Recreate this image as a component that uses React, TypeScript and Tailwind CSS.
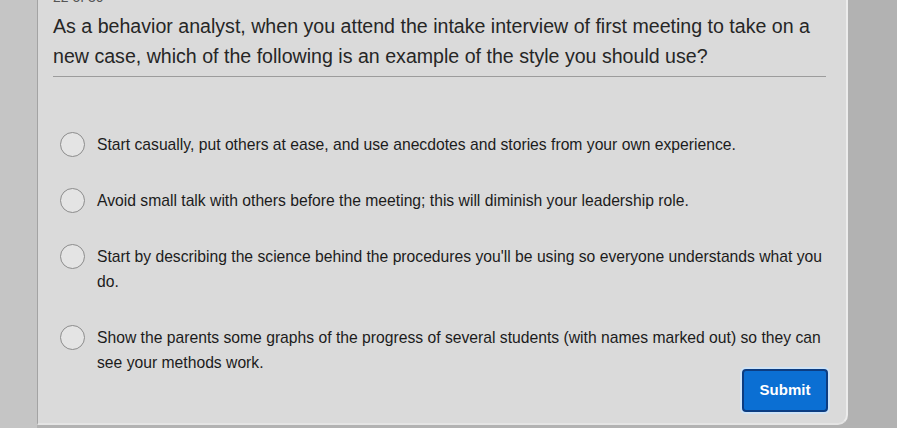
const options = [
  'Start casually, put others at ease, and use anecdotes and stories from your own experience.',
  'Avoid small talk with others before the meeting; this will diminish your leadership role.',
  "Start by describing the science behind the procedures you'll be using so everyone understands what you do.",
  'Show the parents some graphs of the progress of several students (with names marked out) so they can see your methods work.',
]

export default function App() {
  return (
    <div className="w-[897px] h-[428px] overflow-hidden flex bg-[#b2b2b2] font-['Liberation_Sans',Arial,sans-serif]">
      <div className="w-[37px] shrink-0 bg-[#c5c5c5]" />
      <div className="w-[811px] h-[425px] shrink-0 flex flex-col bg-[#dadada] border-l border-l-[#a3a3a3] border-r-2 border-r-[#ececec] border-b-2 border-b-[#e4e4e4] rounded-br-[10px] pl-[15px] pr-[18px]">
        <div className="-mt-[13px] text-[14px] leading-[20px] text-[#555]">22 of 30</div>
        <div className="mt-[4px] text-[19.6px] leading-[30px] text-[#262626]">
          As a behavior analyst, when you attend the intake interview of first meeting to take on a new case, which of the following is an example of the style you should use?
        </div>
        <div className="mt-[5px] mr-[2px] border-t border-[#9c9c9c]" />
        <div className="mt-[55px] pl-[7px] flex flex-col gap-[31px]">
          {options.map((o) => (
            <label key={o} className="flex items-start gap-[12px] cursor-pointer">
              <span className="w-[25px] h-[25px] shrink-0 rounded-full border-[1.5px] border-[#8c8c8c] bg-[#e4e4e4]" />
              <span className="text-[15.7px] leading-[25px] text-[#1c1c1c]">{o}</span>
            </label>
          ))}
        </div>
        <div className="-mt-[6px] flex justify-end">
          <button className="w-[86px] h-[43px] rounded-[4px] bg-[#0b6fd3] border-2 border-[#0c3d82] shadow-[0_0_0_2px_#cfe3f6] text-white text-[15px] font-bold">
            Submit
          </button>
        </div>
      </div>
    </div>
  )
}
